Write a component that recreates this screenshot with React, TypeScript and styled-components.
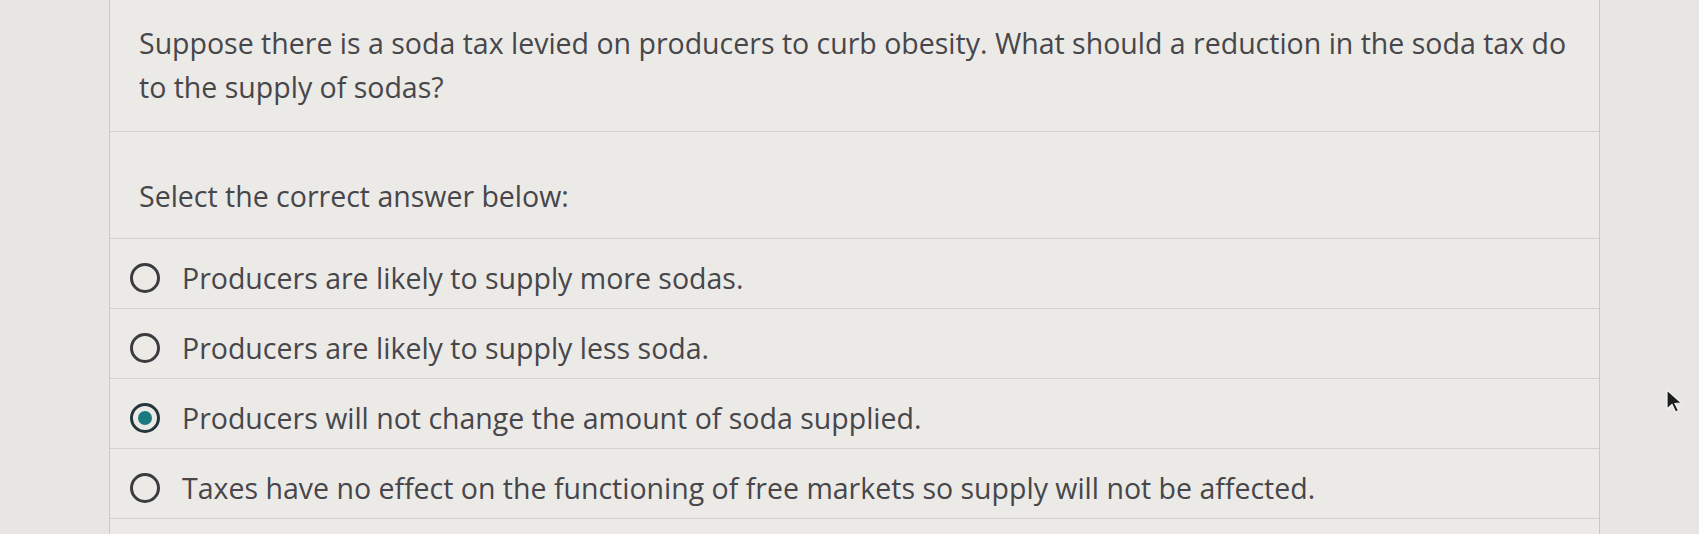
import React from 'react';
import styled, { createGlobalStyle } from 'styled-components';

const GlobalStyle = createGlobalStyle`
    html, body {
        margin: 0;
        padding: 0;
        background: #e7e6e2;
    }
    body {
        font-family: "Open Sans", "Liberation Sans", sans-serif;
        color: #47464b;
    }
`;

const Page = styled.div`
    position: relative;
    height: 534px;
    padding-left: 109px;
    overflow: hidden;
`;

const Panel = styled.div`
    width: 1489px;
    min-height: 534px;
    background: #ebeae6;
    border-left: 1px solid #cac9c5;
    border-right: 1px solid #cac9c5;
`;

const Section = styled.div<{ $top: number; $bottom: number; }>`
    padding: ${props => props.$top}px 8px ${props => props.$bottom}px 29px;
    border-bottom: 1px solid #d2d1cd;
    font-size: 28.5px;
    line-height: 44px;
`;

const OptionList = styled.div`
    display: flex;
    flex-direction: column;
`;

const OptionRow = styled.label`
    box-sizing: border-box;
    display: flex;
    align-items: center;
    gap: 22px;
    height: 70px;
    padding: 9px 0 0 20px;
    border-bottom: 1px solid #d2d1cd;
    font-size: 28.5px;
    cursor: pointer;
`;

const Radio = styled.span<{ $checked: boolean; }>`
    box-sizing: border-box;
    flex: none;
    width: 30px;
    height: 30px;
    border-radius: 50%;
    border: 3px solid ${props => props.$checked ? '#24363b' : '#3c3b40'};
    display: grid;
    place-items: center;

    &::after {
        content: '';
        width: 14px;
        height: 14px;
        border-radius: 50%;
        background: ${props => props.$checked ? '#1a7a7f' : 'transparent'};
    }
`;

const Cursor = styled.svg`
    position: absolute;
    left: 1665px;
    top: 389px;
`;

const OPTIONS = [
    'Producers are likely to supply more sodas.',
    'Producers are likely to supply less soda.',
    'Producers will not change the amount of soda supplied.',
    'Taxes have no effect on the functioning of free markets so supply will not be affected.',
];

export default function App() {
    const selected = 2;
    return (
        <Page>
            <GlobalStyle />
            <Panel>
                <Section $top={21} $bottom={22}>
                    Suppose there is a soda tax levied on producers to curb obesity. What should a reduction in the soda tax do to the supply of sodas?
                </Section>
                <Section $top={42} $bottom={20}>
                    Select the correct answer below:
                </Section>
                <OptionList>
                    {OPTIONS.map((text, index) => (
                        <OptionRow key={index}>
                            <Radio $checked={index === selected} />
                            <span>{text}</span>
                        </OptionRow>
                    ))}
                </OptionList>
            </Panel>
            <Cursor width="20" height="28" viewBox="0 0 20 28">
                <path d="M2 1 L2 20 L7 15.5 L10.5 23 L13.5 21.5 L10 14.5 L16.5 14 Z" fill="#1d1d20" stroke="#f4f4f2" strokeWidth="1.2" />
            </Cursor>
        </Page>
    );
}
